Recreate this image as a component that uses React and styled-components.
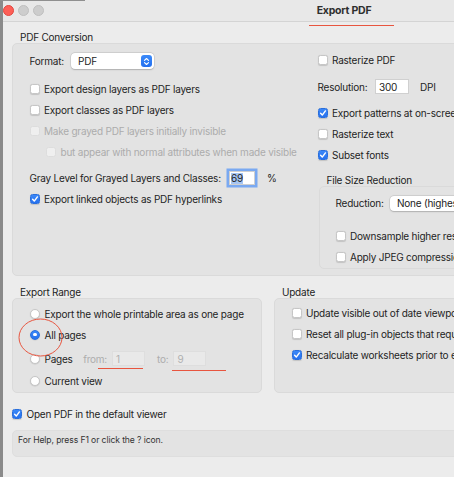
import React from 'react';
import styled, { createGlobalStyle } from 'styled-components';

const GlobalStyle = createGlobalStyle`
  html, body { margin: 0; padding: 0; background: #ececec; overflow: hidden; }
  body { font-family: Inter, "Noto Sans", "Liberation Sans", sans-serif; -webkit-font-smoothing: antialiased; }
  #root { width: 454px; height: 477px; }
`;

const Page = styled.div`
  position: relative;
  width: 454px;
  height: 477px;
  overflow: hidden;
  background: #ececec;
`;

const Window = styled.div`
  width: 688px;
  height: 477px;
  display: flex;
  flex-direction: column;
  background: #ececec;
  color: #232323;
  font-size: 10px;
  line-height: 12px;
  letter-spacing: -0.22px;
`;

const TitleBar = styled.div`
  flex: none;
  height: 21px;
  border-bottom: 1px solid #d4d4d4;
  background: #e8e8e8;
  display: grid;
  grid-template-columns: 1fr auto 1fr;
  align-items: center;
`;

const Lights = styled.div`
  display: flex;
  gap: 4px;
  padding-left: 2.5px;
`;

const Light = styled.span`
  width: 11px;
  height: 11px;
  border-radius: 50%;
  box-sizing: border-box;
  background: ${(p) => (p.$red ? '#fe5f57' : '#cdcdcd')};
  border: 0.5px solid ${(p) => (p.$red ? '#e2463f' : '#bfbfbf')};
`;

const Title = styled.div`
  font-weight: 700;
  font-size: 10.5px;
  color: #2e2e2e;
`;

const Content = styled.div`
  display: flex;
  flex-direction: column;
  padding: 0 12px;
`;

const SectionLabel = styled.div`
  height: 11px;
  line-height: 11px;
  margin: ${(p) => p.$mt}px 0 0 8px;
  white-space: nowrap;
`;

const GroupBox = styled.div`
  box-sizing: border-box;
  background: #e3e3e3;
  border: 1px solid #dadada;
  border-radius: 5px;
  height: ${(p) => p.$h}px;
`;

const ConversionBox = styled(GroupBox)`
  display: grid;
  grid-template-columns: 304.5px 1fr;
`;

const Column = styled.div`
  display: flex;
  flex-direction: column;
  padding: ${(p) => p.$pt}px 0 0 ${(p) => p.$pl}px;
`;

const Row = styled.div`
  display: flex;
  align-items: center;
  height: ${(p) => p.$h || 21}px;
  margin-top: ${(p) => p.$mt || 0}px;
  margin-left: ${(p) => p.$ml || 0}px;
  white-space: nowrap;
  color: ${(p) => (p.$disabled ? '#acacac' : '#232323')};
`;

const FieldLabel = styled.span`
  display: inline-block;
  width: ${(p) => p.$w}px;
  flex: none;
`;

const Box = styled.span`
  flex: none;
  width: 10px;
  height: 10px;
  box-sizing: border-box;
  border-radius: 2.5px;
  margin-right: 4.5px;
  display: inline-flex;
  align-items: center;
  justify-content: center;
  background: ${(p) => (p.$checked ? 'linear-gradient(#3a88f8, #2671ee)' : p.$disabled ? '#efefef' : '#fff')};
  border: 0.5px solid ${(p) => (p.$checked ? '#2a6fdc' : p.$disabled ? '#dddddd' : '#c6c6c6')};
  box-shadow: ${(p) => (p.$disabled ? 'none' : '0 0.5px 1px rgba(0,0,0,0.14)')};
`;

const RadioBox = styled(Box)`
  border-radius: 50%;
`;

const Dot = styled.span`
  width: 3.5px;
  height: 3.5px;
  border-radius: 50%;
  background: #fff;
`;

const Check = () => (
  <svg width="8" height="8" viewBox="0 0 10 10">
    <path d="M2 5.4 L4.1 7.6 L8 2.4" fill="none" stroke="#fff" strokeWidth="1.8" strokeLinecap="round" strokeLinejoin="round" />
  </svg>
);

const Checkbox = ({ checked, disabled, children, ...rest }) => (
  <Row $disabled={disabled} {...rest}>
    <Box $checked={checked} $disabled={disabled}>{checked && <Check />}</Box>
    {children}
  </Row>
);

const Radio = ({ checked, children, ...rest }) => (
  <Row {...rest}>
    <RadioBox $checked={checked}>{checked && <Dot />}</RadioBox>
    {children}
  </Row>
);

const SelectBox = styled.div`
  box-sizing: border-box;
  width: ${(p) => p.$w}px;
  height: 15.5px;
  background: #fff;
  border-radius: 4px;
  box-shadow: 0 0 0 0.5px rgba(0,0,0,0.12), 0 0.5px 1.5px rgba(0,0,0,0.18);
  display: flex;
  align-items: center;
  justify-content: space-between;
  padding: 0 2px 0 7px;
`;

const Stepper = styled.span`
  width: 11px;
  height: 12px;
  border-radius: 3px;
  background: linear-gradient(#3b8af9, #2470ef);
  display: flex;
  align-items: center;
  justify-content: center;
`;

const StepperIcon = () => (
  <svg width="7" height="9" viewBox="0 0 7 9">
    <path d="M1.5 3.4 L3.5 1.5 L5.5 3.4 M1.5 5.6 L3.5 7.5 L5.5 5.6" fill="none" stroke="#fff" strokeWidth="1.1" strokeLinecap="round" strokeLinejoin="round" />
  </svg>
);

const TextInput = styled.div`
  box-sizing: border-box;
  flex: none;
  width: ${(p) => p.$w}px;
  height: ${(p) => p.$h || 15}px;
  margin-left: ${(p) => p.$ml || 0}px;
  background: ${(p) => (p.$disabled ? '#e9e9e9' : '#fff')};
  color: ${(p) => (p.$disabled ? '#b0b0b0' : '#232323')};
  border: 0.5px solid ${(p) => (p.$disabled ? '#dedede' : '#d0d0d0')};
  box-shadow: ${(p) => (p.$focus ? '0 0 0 2.5px #7aa9f1' : 'none')};
  display: flex;
  align-items: center;
  padding-left: ${(p) => p.$pl || 3}px;
`;

const Selected = styled.span`
  background: #a6c5f2;
  padding: 0 0.5px;
  line-height: 11px;
`;

const Unit = styled.span`
  margin-left: ${(p) => p.$ml}px;
`;

const Muted = styled.span`
  color: #adadad;
  margin-left: ${(p) => p.$ml}px;
`;

const Nested = styled.div`
  display: flex;
  flex-direction: column;
  margin: ${(p) => p.$mt}px 17px 0 1px;
`;

const NestedBox = styled(GroupBox)`
  display: flex;
  flex-direction: column;
  padding: 6px 0 0 16px;
`;

const TwoGroups = styled.div`
  display: grid;
  grid-template-columns: 250px 1fr;
  column-gap: 12px;
`;

const GroupCol = styled.div`
  display: flex;
  flex-direction: column;
`;

const RangeBox = styled(GroupBox)`
  display: flex;
  flex-direction: column;
  padding: ${(p) => p.$pt}px 0 0 ${(p) => p.$pl}px;
`;

const HelpBox = styled.div`
  margin-top: 5px;
  height: 27px;
  box-sizing: border-box;
  background: #e3e3e3;
  border: 1px solid #dedede;
  border-radius: 5px;
  padding: 4px 0 0 5px;
  font-size: 8.6px;
  line-height: 11px;
  letter-spacing: -0.1px;
  color: #333;
  white-space: nowrap;
`;

const Strip = styled.div`
  position: absolute;
  left: 0;
  top: 0;
  width: 2.7px;
  height: 477px;
  background: #8a8a8a;
`;

const TopEdge = styled.div`
  position: absolute;
  left: 0;
  top: 0;
  width: 85px;
  height: 1px;
  background: #8f8f8f;
`;

const Annotations = styled.svg`
  position: absolute;
  left: 0;
  top: 0;
  pointer-events: none;
`;

export default function App() {
  return (
    <Page>
      <GlobalStyle />
      <Window>
        <TitleBar>
          <Lights>
            <Light $red />
            <Light />
            <Light />
          </Lights>
          <Title>Export PDF</Title>
          <span />
        </TitleBar>
        <Content>
          <SectionLabel $mt={9.5}>PDF Conversion</SectionLabel>
          <ConversionBox $h={233.5}>
            <Column $pt={7} $pl={16.5}>
              <Row>
                <FieldLabel $w={41.5}>Format:</FieldLabel>
                <SelectBox $w={83}>
                  <span>PDF</span>
                  <Stepper><StepperIcon /></Stepper>
                </SelectBox>
              </Row>
              <Checkbox $mt={7}>Export design layers as PDF layers</Checkbox>
              <Checkbox>Export classes as PDF layers</Checkbox>
              <Checkbox disabled>Make grayed PDF layers initially invisible</Checkbox>
              <Checkbox disabled $ml={16.5}>but appear with normal attributes when made visible</Checkbox>
              <Row $mt={5}>
                <FieldLabel $w={199}>Gray Level for Grayed Layers and Classes:</FieldLabel>
                <TextInput $w={26} $h={14} $focus $pl={1}>
                  <Selected>69</Selected>
                </TextInput>
                <Unit $ml={12.5}>%</Unit>
              </Row>
              <Checkbox checked>Export linked objects as PDF hyperlinks</Checkbox>
            </Column>
            <Column $pt={6} $pl={0}>
              <Checkbox>Rasterize PDF</Checkbox>
              <Row $mt={5.5}>
                <FieldLabel $w={57.5}>Resolution:</FieldLabel>
                <TextInput $w={33.5} $h={15.5}>300</TextInput>
                <Unit $ml={11.5}>DPI</Unit>
              </Row>
              <Checkbox checked $mt={5}>Export patterns at on-screen resolution</Checkbox>
              <Checkbox>Rasterize text</Checkbox>
              <Checkbox checked>Subset fonts</Checkbox>
              <Nested $mt={10}>
                <SectionLabel $mt={0}>File Size Reduction</SectionLabel>
                <NestedBox $h={82.5}>
                  <Row>
                    <FieldLabel $w={54.5}>Reduction:</FieldLabel>
                    <SelectBox $w={160}>
                      <span>None (highest quality)</span>
                      <Stepper><StepperIcon /></Stepper>
                    </SelectBox>
                  </Row>
                  <Checkbox $mt={12}>Downsample higher resolution images</Checkbox>
                  <Checkbox>Apply JPEG compression to images</Checkbox>
                </NestedBox>
              </Nested>
            </Column>
          </ConversionBox>
          <TwoGroups>
            <GroupCol>
              <SectionLabel $mt={11}>Export Range</SectionLabel>
              <RangeBox $h={95} $pt={4} $pl={17}>
                <Radio>Export the whole printable area as one page</Radio>
                <Radio checked>All pages</Radio>
                <Radio $mt={2} $h={23}>
                  Pages
                  <Muted $ml={10.5}>from:</Muted>
                  <TextInput $disabled $w={33} $h={14.5} $ml={5}>1</TextInput>
                  <Muted $ml={12}>to:</Muted>
                  <TextInput $disabled $w={33} $h={14.5} $ml={5}>9</TextInput>
                </Radio>
                <Radio>Current view</Radio>
              </RangeBox>
            </GroupCol>
            <GroupCol>
              <SectionLabel $mt={11}>Update</SectionLabel>
              <RangeBox $h={95} $pt={3.5} $pl={16.5}>
                <Checkbox>Update visible out of date viewports before export</Checkbox>
                <Checkbox>Reset all plug-in objects that require reset</Checkbox>
                <Checkbox checked>Recalculate worksheets prior to export</Checkbox>
              </RangeBox>
            </GroupCol>
          </TwoGroups>
          <Checkbox checked $mt={10.5}>Open PDF in the default viewer</Checkbox>
          <HelpBox>For Help, press F1 or click the ? icon.</HelpBox>
        </Content>
      </Window>
      <Strip />
      <TopEdge />
      <Annotations width="454" height="477" viewBox="0 0 454 477">
        <line x1="309" y1="25.5" x2="394" y2="25.5" stroke="#e8553f" strokeWidth="1.2" />
        <ellipse cx="40.5" cy="337.5" rx="21.5" ry="18.5" fill="none" stroke="#e8553f" strokeWidth="1" />
        <line x1="98" y1="368.5" x2="143" y2="368.5" stroke="#e8553f" strokeWidth="1.2" />
        <line x1="172" y1="370.5" x2="226" y2="370.5" stroke="#e8553f" strokeWidth="1.2" />
      </Annotations>
    </Page>
  );
}
